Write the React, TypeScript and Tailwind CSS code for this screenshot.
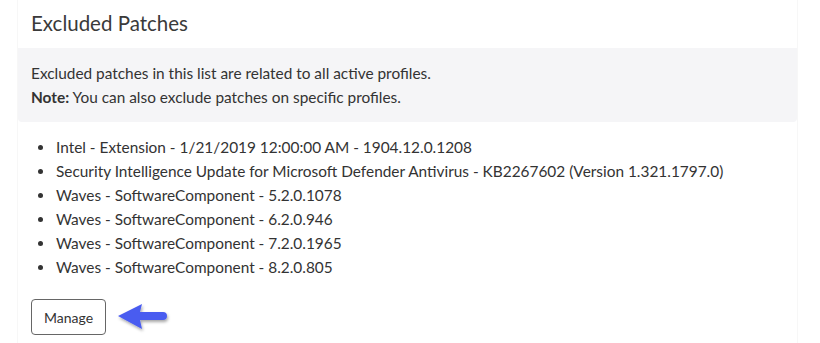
const patches = [
  "Intel - Extension - 1/21/2019 12:00:00 AM - 1904.12.0.1208",
  "Security Intelligence Update for Microsoft Defender Antivirus - KB2267602 (Version 1.321.1797.0)",
  "Waves - SoftwareComponent - 5.2.0.1078",
  "Waves - SoftwareComponent - 6.2.0.946",
  "Waves - SoftwareComponent - 7.2.0.1965",
  "Waves - SoftwareComponent - 8.2.0.805",
]

function PointerArrow() {
  return (
    <svg width="56" height="34" viewBox="0 0 56 34" aria-hidden="true">
      <defs>
        <filter id="arrow-shadow" x="-20%" y="-30%" width="140%" height="160%">
          <feDropShadow dx="1" dy="2" stdDeviation="1.5" floodColor="#000" floodOpacity="0.35" />
        </filter>
      </defs>
      <g filter="url(#arrow-shadow)">
        <path d="M2 16 L26 4 L24 12 L47 12 Q51 12 51 16 Q51 20 47 20 L24 20 L26 29 Z" fill="#4a5cf0" />
      </g>
    </svg>
  )
}

export default function App() {
  return (
    <div className="h-[343px] w-[820px] bg-white font-['Lato',sans-serif] text-[#333]">
      <section className="ml-[17px] flex h-full w-[781px] flex-col border-x border-[#f7f7f7] bg-white">
        <h2 className="px-[13px] pt-[9px] pb-[11px] text-[20.5px] leading-[28px] text-[#3a3a3a]">Excluded Patches</h2>

        <div className="rounded-b-[4px] bg-[#f5f5f7] px-[13px] py-[13px] text-[15.4px] leading-[24px]">
          <p>Excluded patches in this list are related to all active profiles.</p>
          <p>
            <strong className="font-bold">Note:</strong> You can also exclude patches on specific profiles.
          </p>
        </div>

        <ul className="mt-[13px] list-disc pl-[37px] text-[15.4px] leading-[24px] marker:text-[#333]">
          {patches.map((patch) => (
            <li key={patch} className="pl-[1px]">
              {patch}
            </li>
          ))}
        </ul>

        <div className="mt-[20px] flex items-center gap-[10px] pl-[13px]">
          <button
            type="button"
            className="h-[36px] rounded-[4px] border border-[#666] bg-white px-[12px] text-[14px] text-[#333]"
          >
            Manage
          </button>
          <PointerArrow />
        </div>
      </section>
    </div>
  )
}
